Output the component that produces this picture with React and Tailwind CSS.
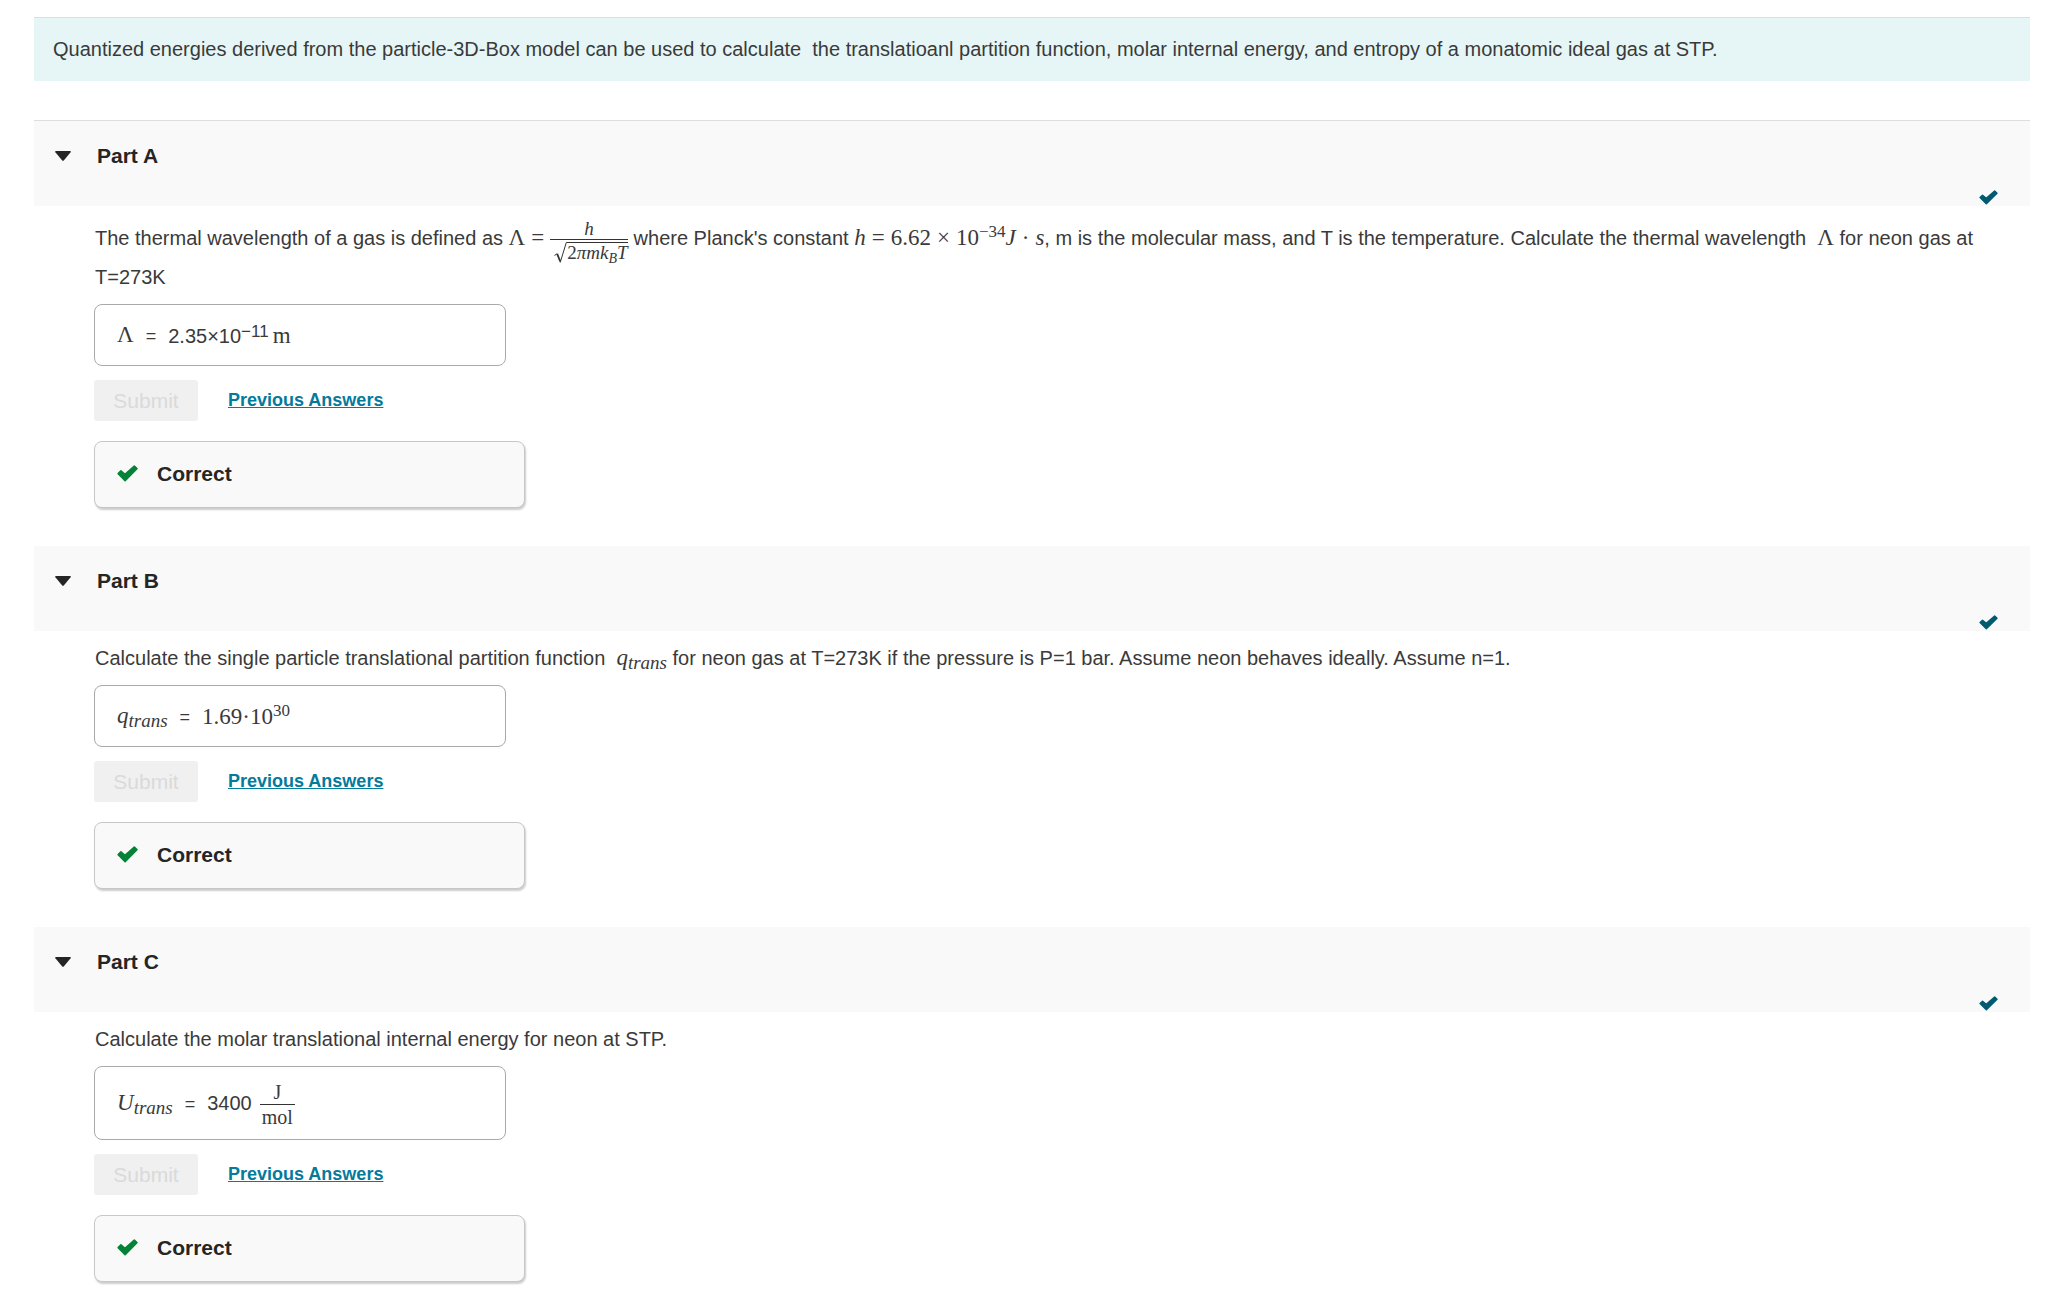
import { useState } from 'react'
import clsx from 'clsx'

const Check = ({ className }) => (
  <svg viewBox="0 0 21 17" preserveAspectRatio="none" className={className} aria-hidden="true">
    <path d="M1.2 8.6 3.9 5.9 8 9.4 17.3 1.2 19.9 3.7 8.1 15.6Z" fill="currentColor" stroke="currentColor" strokeWidth="1.6" strokeLinejoin="round" />
  </svg>
)

const Math = ({ className, children }) => <span className={clsx('font-["Liberation_Serif",serif] text-[23px] leading-none whitespace-nowrap', className)}>{children}</span>
const Sup = ({ children }) => <span className="relative -top-2 text-[17px]">{children}</span>
const Sub = ({ children }) => <span className="relative top-1 text-[19px] italic">{children}</span>

// h over the square root of 2πmkT
function WavelengthFraction() {
  return (
    <span className='mx-1.5 inline-flex flex-col items-center align-middle font-["Liberation_Serif",serif] text-[19px] italic'>
      <span className="h-[22px] w-full border-b border-[#333] text-center leading-[22px]">h</span>
      <span className="flex h-[22px] pt-[2px] pl-1">
        <svg viewBox="0 0 13 21" className="h-[21px] w-[13px] shrink-0" fill="none" stroke="#333" aria-hidden="true">
          <path d="M.5 13.5 3.2 11.6" strokeWidth="1" />
          <path d="M3.2 11.8 6.2 19.5" strokeWidth="1.8" />
          <path d="M6.2 20.5 12.3.5H13" strokeWidth="1" />
        </svg>
        <span className="border-t border-[#333] leading-[20px] whitespace-nowrap"><span className="not-italic">2</span>πmk<span className="relative top-1 text-[14px]">B</span>T</span>
      </span>
    </span>
  )
}

const PARTS = [
  {
    title: 'Part A',
    question: <>
      The thermal wavelength of a gas is defined as <Math>Λ<span className="ml-1.5">=</span></Math><WavelengthFraction />where Planck's constant <Math><i>h</i><span className="mx-1.5">=</span>6.62<span className="mx-1.5">×</span>10<Sup>−34</Sup><i>J</i><span className="mx-1.5">·</span><i>s</i></Math>, m is the molecular mass, and T is the temperature. Calculate the thermal wavelength &nbsp;<Math>Λ</Math> for neon gas at T=273K
    </>,
    label: <Math>Λ</Math>,
    answer: <>2.35×10<span className="relative -top-1.5 text-[17px]">−11</span><Math className="ml-1">m</Math></>,
  },
  {
    title: 'Part B',
    question: <>
      Calculate the single particle translational partition function &nbsp;<Math><i>q</i><Sub>trans</Sub></Math> for neon gas at T=273K if the pressure is P=1 bar. Assume neon behaves ideally. Assume n=1.
    </>,
    label: <Math><i>q</i><Sub>trans</Sub></Math>,
    answer: <Math>1.69·10<Sup>30</Sup></Math>,
  },
  {
    title: 'Part C',
    question: 'Calculate the molar translational internal energy for neon at STP.',
    label: <Math><i>U</i><Sub>trans</Sub></Math>,
    tall: true,
    answer: <>
      3400
      <span className='ml-2 inline-flex flex-col items-center align-middle font-["Liberation_Serif",serif] text-[20px] leading-6'>
        <span className="w-full border-b border-[#333] px-0.5 text-center">J</span>
        <span className="px-0.5">mol</span>
      </span>
    </>,
  },
]

function Part({ part, first }) {
  const [open, setOpen] = useState(true)
  return (
    <section className="mb-[38px]">
      <header className={clsx('flex justify-between bg-[#f9f9f9]', first && 'border-t border-[#dcdfdf]')}>
        <button onClick={() => setOpen(!open)} aria-expanded={open} className="flex items-center gap-[26px] pt-[20px] pr-4 pb-[35px] pl-[21px] text-[21px] leading-[30px] font-bold text-[#252525]">
          <svg viewBox="0 0 16 10" className={clsx('h-[10px] w-4', !open && '-rotate-90')} fill="currentColor" aria-hidden="true"><path d="M1 0h14q1.5 0 .6 1.2L9 9.2q-1 1.2-2 0L.4 1.2Q-.5 0 1 0Z" /></svg>
          {part.title}
        </button>
        <Check className="mr-8 mb-px h-[15px] w-[19px] self-end text-[#005a70]" />
      </header>
      {open && (
        <div className="pt-3 pr-5 pl-[60px]">
          <p className="pl-px text-[20px] leading-[30px]">{part.question}</p>
          <div className={clsx('mt-3 flex w-full max-w-[412px] items-center rounded-lg border border-[#a9a9a9] px-[22px] pt-[2px]', part.tall ? 'h-[74px]' : 'h-[62px]')}>
            <span>{part.label}</span>
            <span className="mx-3 text-[18px]">=</span>
            <span className="text-[20px] whitespace-nowrap">{part.answer}</span>
          </div>
          <div className="mt-[14px] flex items-center gap-[30px]">
            <button disabled className="h-[41px] w-[104px] rounded-[3px] bg-[#f0f0f0] text-[21px] text-[#dadada]">Submit</button>
            <a href="#" className="pb-[2px] text-[18px] leading-6 font-bold text-[#047a9c] underline">Previous Answers</a>
          </div>
          <div className="mt-[20px] flex h-[67px] w-full max-w-[431px] items-center gap-[19px] rounded-lg border border-[#c7c7c7] bg-[#f9f9f9] px-[22px] pb-[2px] text-[21px] font-bold text-[#252525] shadow-[1px_2px_2px_#00000033]">
            <Check className="h-[17px] w-[21px] text-[#038238]" />
            Correct
          </div>
        </div>
      )}
    </section>
  )
}

export default function App() {
  return (
    <main className='pt-[17px] pr-[30px] pl-[34px] font-["Liberation_Sans",Arial,sans-serif] text-[#3a3a3a]'>
      <p className="mb-[39px] border-t border-[#dcdfdf] bg-[#e6f6f6] px-[19px] pt-[16px] pb-[17px] text-[20px] leading-[30px]">
        Quantized energies derived from the particle-3D-Box model can be used to calculate &nbsp;the translatioanl partition function, molar internal energy, and entropy of a monatomic ideal gas at STP.
      </p>
      {PARTS.map((part, i) => <Part key={part.title} part={part} first={i === 0} />)}
    </main>
  )
}
